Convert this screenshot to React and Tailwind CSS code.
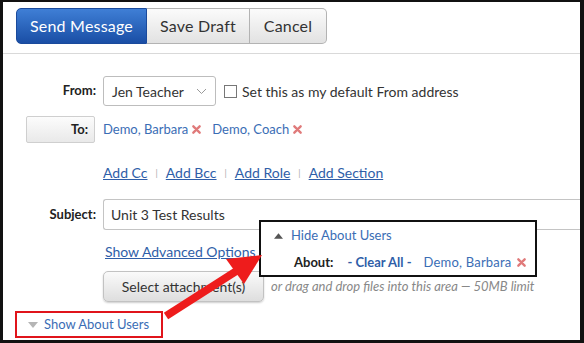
import React from 'react';

const font = { fontFamily: 'Lato, "Open Sans", sans-serif' };

const RemoveX = ({ gap = 'ml-[4px]' }) => (
  <svg width="9" height="9" viewBox="0 0 10 10" className={`inline-block shrink-0 ${gap}`}>
    <path d="M1.5 1.5 L8.5 8.5 M8.5 1.5 L1.5 8.5" stroke="#e07a7a" strokeWidth="2.6" strokeLinecap="round" />
  </svg>
);

const Label = ({ children }) => (
  <div className="w-[93px] shrink-0 text-right text-[13px] font-bold text-[#222]">{children}</div>
);

export default function App() {
  return (
    <div
      className="relative w-[584px] h-[343px] overflow-hidden bg-white border-t-2 border-l-[3px] border-r-4 border-b-[3px] border-[#111] text-[#333]"
      style={font}
    >
      {/* toolbar */}
      <div className="flex pt-[6px] pl-[13px] pb-[9px] border-b border-[#d9d9d9]">
        <button className="w-[131px] h-[36px] rounded-l-[5px] bg-gradient-to-b from-[#3f7fd6] to-[#1a4ea5] border border-[#1a4a9c] text-white text-[16px] tracking-[0.2px]">
          Send Message
        </button>
        <button className="w-[103px] h-[36px] bg-gradient-to-b from-[#fbfbfb] to-[#e2e2e2] border border-l-0 border-[#b3b3b3] text-[16px] text-[#333] tracking-[0.2px]">
          Save Draft
        </button>
        <button className="w-[77px] h-[36px] rounded-r-[5px] bg-gradient-to-b from-[#fbfbfb] to-[#e2e2e2] border border-l-0 border-[#b3b3b3] text-[16px] text-[#333] tracking-[0.2px]">
          Cancel
        </button>
      </div>

      <div className="flex flex-col">
        {/* From */}
        <div className="flex items-center gap-[7px] mt-[22px]">
          <Label>From:</Label>
          <div className="flex items-center justify-between w-[113px] h-[30px] px-[8px] border border-[#bdbdbd] rounded-[3px] text-[14px] text-[#333]">
            <span>Jen Teacher</span>
            <svg width="11" height="7" viewBox="0 0 11 7">
              <path d="M1 1 L5.5 5.5 L10 1" fill="none" stroke="#999" strokeWidth="1" />
            </svg>
          </div>
          <div className="flex items-center gap-[5px] ml-[1px] text-[14px] text-[#333]">
            <span className="w-[13px] h-[13px] border border-[#777] bg-white"></span>
            <span>Set this as my default From address</span>
          </div>
        </div>

        {/* To */}
        <div className="flex items-center mt-[10px]">
          <div className="ml-[23px] w-[69px] h-[27px] flex items-center justify-end pr-[6px] bg-gradient-to-b from-[#fcfcfc] to-[#e9e9e9] border border-[#cfcfcf] rounded-[2px] text-[13px] font-bold text-[#222]">
            To:
          </div>
          <div className="flex items-center ml-[8px] text-[13px] text-[#3a6db5]">
            <span>Demo, Barbara</span>
            <RemoveX />
            <span className="ml-[11px]">Demo, Coach</span>
            <RemoveX />
          </div>
        </div>

        {/* add links */}
        <div className="flex items-center ml-[100px] mt-[19px] text-[14px] text-[#2f5ea8]">
          <span className="underline">Add Cc</span>
          <span className="mx-[8px] text-[9px] text-[#aaa]">|</span>
          <span className="underline">Add Bcc</span>
          <span className="mx-[8px] text-[9px] text-[#aaa]">|</span>
          <span className="underline">Add Role</span>
          <span className="mx-[8px] text-[9px] text-[#aaa]">|</span>
          <span className="underline">Add Section</span>
        </div>

        {/* subject */}
        <div className="flex items-center gap-[7px] mt-[16px]">
          <Label>Subject:</Label>
          <div className="flex-1 h-[31px] flex items-center pl-[7px] border border-r-0 border-[#c4c4c4] rounded-l-[3px] text-[14px] text-[#333]">
            Unit 3 Test Results
          </div>
        </div>

        {/* advanced */}
        <div className="ml-[102px] mt-[13px] text-[14px] text-[#2f5ea8] underline leading-[18px]">
          Show Advanced Options
        </div>

        {/* attachment */}
        <div className="flex items-center mt-[10px] ml-[100px]">
          <button className="w-[161px] h-[31px] rounded-[5px] bg-gradient-to-b from-[#fafafa] to-[#dedede] border border-[#c2c2c2] shadow-[0_1px_2px_rgba(0,0,0,0.2)] text-[14px] text-[#333]">
            Select attachment(s)
          </button>
          <span className="ml-[7px] text-[13px] italic text-[#888]">
            or drag and drop files into this area — 50MB limit
          </span>
        </div>

        {/* show about users */}
        <div className="ml-[12px] mt-[9px] w-[148px] h-[27px] flex items-center border-2 border-[#e0141b] pl-[11px] text-[13px] text-[#3a6db5]">
          <svg width="10" height="6" viewBox="0 0 10 6" className="mr-[6px]">
            <path d="M0 0 L10 0 L5 6 Z" fill="#b5b5b5" />
          </svg>
          Show About Users
        </div>
      </div>

      {/* callout */}
      <div className="absolute left-[256px] top-[218px] w-[278px] h-[57px] bg-white border-2 border-[#111] pl-[13px] pt-[4px] whitespace-nowrap">
        <div className="flex items-center text-[13px] text-[#3a6db5]">
          <svg width="9" height="6" viewBox="0 0 10 6" className="mr-[8px]">
            <path d="M0 6 L10 6 L5 0 Z" fill="#555" />
          </svg>
          Hide About Users
        </div>
        <div className="flex items-center mt-[7px] ml-[20px] text-[13px]">
          <span className="shrink-0 font-bold text-[#222]">About:</span>
          <span className="shrink-0 ml-[14px] font-bold text-[#2f5ea8]">- Clear All -</span>
          <span className="shrink-0 ml-[12px] text-[#3a6db5] tracking-[0.2px]">Demo, Barbara</span>
          <RemoveX gap="ml-[5px]" />
        </div>
      </div>

      {/* arrow */}
      <svg className="absolute left-0 top-0 pointer-events-none" width="584" height="343" viewBox="3 2 584 343">
        <line x1="166" y1="316" x2="238" y2="270" stroke="#ee1c1c" strokeWidth="8" />
        <polygon points="262,255 226,259 244,284" fill="#ee1c1c" />
      </svg>
    </div>
  );
}
